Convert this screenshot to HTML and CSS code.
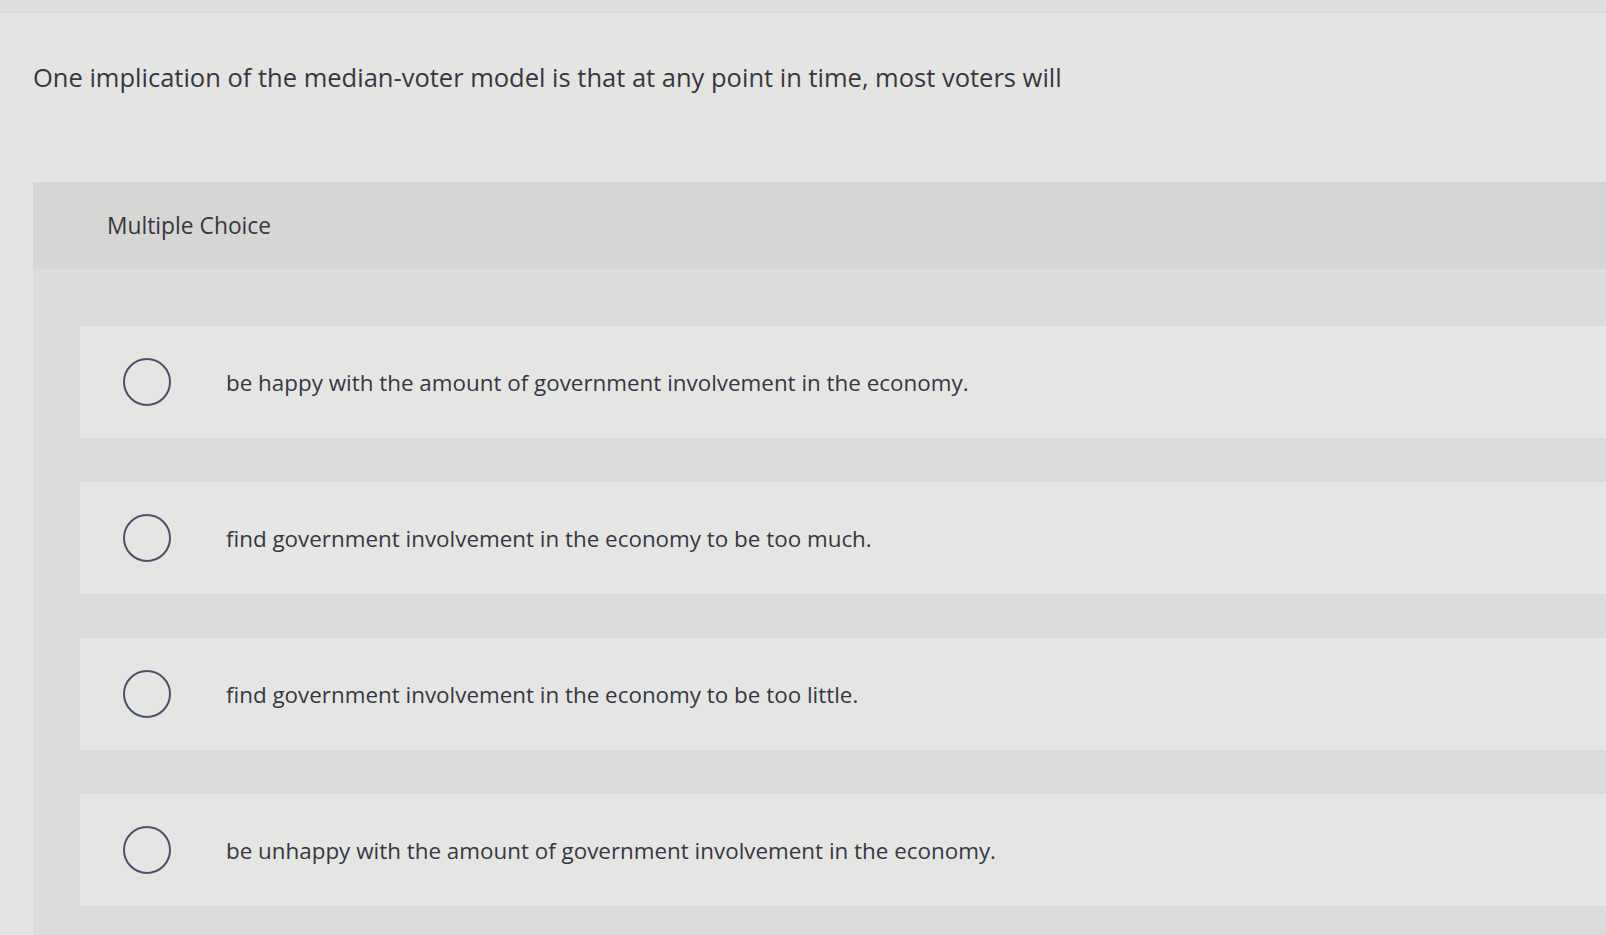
FILE: index.html
```html
<!DOCTYPE html>
<html>
<head>
<meta charset="utf-8">
<link rel="stylesheet" href="styles.css">
</head>
<body>
<div class="topband"></div>
<div class="page">
  <p class="question">One implication of the median-voter model is that at any point in time, most voters will</p>
  <div class="mc">
    <div class="mc-head">Multiple Choice</div>
    <div class="mc-body">
      <div class="opt"><span class="radio"></span><span class="opt-text">be happy with the amount of government involvement in the economy.</span></div>
      <div class="opt"><span class="radio"></span><span class="opt-text">find government involvement in the economy to be too much.</span></div>
      <div class="opt"><span class="radio"></span><span class="opt-text">find government involvement in the economy to be too little.</span></div>
      <div class="opt"><span class="radio"></span><span class="opt-text">be unhappy with the amount of government involvement in the economy.</span></div>
    </div>
  </div>
</div>
</body>
</html>
```

FILE: styles.css
```css
html, body {
  margin: 0;
  padding: 0;
  background: #e4e4e2;
  overflow: hidden;
  height: 935px;
}
body {
  font-family: "Open Sans", "Liberation Sans", sans-serif;
  color: #363740;
}
.topband {
  height: 12px;
  background: #dedfdd;
  border-bottom: 1px solid #d8d8d6;
}
.page {
  padding-left: 33px;
}
.question {
  margin: 48px 0 0 0;
  font-size: 25.5px;
  line-height: 32px;
}
.mc {
  margin-top: 89px;
  background: #dcdddb;
  height: 760px;
}
.mc-head {
  height: 87px;
  background: #d6d6d4;
  display: flex;
  align-items: center;
  padding-left: 74px;
  font-size: 22.8px;
  box-sizing: border-box;
}
.mc-body {
  padding: 57px 0 0 47px;
  display: flex;
  flex-direction: column;
  gap: 44px;
}
.opt {
  height: 112px;
  background: #e5e6e4;
  display: flex;
  align-items: center;
  padding-left: 43px;
}
.radio {
  width: 44px;
  height: 44px;
  border: 2px solid #48526a;
  border-radius: 50%;
  flex: none;
}
.opt-text {
  margin-left: 55px;
  font-size: 22.4px;
}
```
